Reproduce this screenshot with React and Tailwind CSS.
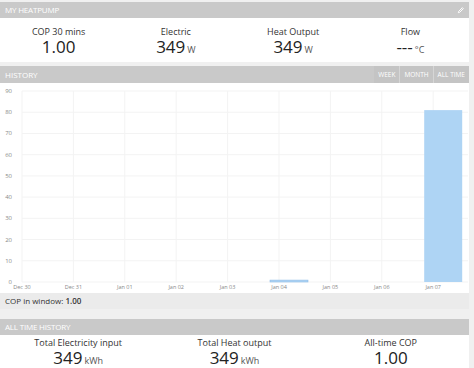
import React from 'react';

const font = { fontFamily: '"Open Sans", "Liberation Sans", sans-serif' };

const Header = ({ title, children }) => (
  <div className="flex items-center justify-between bg-[#c9c9c9] h-[16px] pl-[5px] text-white text-[8px] uppercase tracking-tight">
    <span>{title}</span>
    {children}
  </div>
);

const Stat = ({ label, value, unit, top }) => (
  <div className="flex flex-col items-center">
    <div className={`text-[9px] text-[#333] leading-none ${top}`}>{label}</div>
    <div className="mt-[2px] leading-none text-[#222]">
      <span className="text-[17px] font-medium">{value}</span>
      {unit && <span className="text-[9px] text-[#555] ml-[2px]">{unit}</span>}
    </div>
  </div>
);

const ticks = ['Dec 30', 'Dec 31', 'Jan 01', 'Jan 02', 'Jan 03', 'Jan 04', 'Jan 05', 'Jan 06', 'Jan 07'];
const bars = [{ i: 5, v: 0.9 }, { i: 8, v: 81 }];

const Chart = () => {
  const x0 = 22;
  const step = 51.4;
  const yOf = (v) => 199 - v * 2.122;
  return (
    <svg width="469" height="210" className="block">
      {Array.from({ length: 10 }, (_, k) => (
        <g key={k}>
          <line x1={x0} x2={468} y1={yOf(k * 10)} y2={yOf(k * 10)} stroke="#f3f3f3" strokeWidth="1" />
          <text x={12} y={yOf(k * 10) + 2} fontSize="6" fill="#888" textAnchor="end">{k * 10}</text>
        </g>
      ))}
      {ticks.map((t, i) => (
        <g key={t}>
          <line x1={x0 + i * step} x2={x0 + i * step} y1={yOf(90)} y2={yOf(0)} stroke="#f3f3f3" strokeWidth="1" />
          <text x={x0 + i * step} y={206} fontSize="5.5" fill="#888" textAnchor="middle">{t}</text>
        </g>
      ))}
      {bars.map((b) => (
        <rect
          key={b.i}
          x={x0 + b.i * step - 9}
          y={yOf(b.v)}
          width="38"
          height={yOf(0) - yOf(b.v)}
          fill="#aed4f4"
          stroke={b.v < 2 ? '#8dbbe6' : 'none'}
          strokeWidth="0.6"
        />
      ))}
    </svg>
  );
};

export default function App() {
  return (
    <div className="w-[474px] h-[368px] overflow-hidden bg-[#f0f0f0]" style={font}>
      <div className="pt-[2px] pr-[5px]">
        {/* my heatpump */}
        <div>
          <Header title="My Heatpump">
            <svg width="8" height="8" viewBox="0 0 24 24" className="mr-[4px]" fill="none" stroke="white" strokeWidth="3">
              <path d="M4 20l4-1 11-11-3-3L5 16z" />
            </svg>
          </Header>
          <div className="grid grid-cols-4 bg-white h-[44px]">
            <Stat label="COP 30 mins" value="1.00" top="mt-[9px]" />
            <Stat label="Electric" value="349" unit="W" top="mt-[9px]" />
            <Stat label="Heat Output" value="349" unit="W" top="mt-[9px]" />
            <Stat label="Flow" value="---" unit="°C" top="mt-[9px]" />
          </div>
        </div>

        {/* history */}
        <div className="mt-[4px]">
          <div className="flex items-stretch justify-between bg-[#c9c9c9] h-[17px] pl-[5px] text-white text-[8px] uppercase">
            <span className="self-center">History</span>
            <div className="flex text-[6.5px]">
              <div className="flex items-center px-[4px] bg-[#c4c4c4] border-r border-[#d6d6d6]">WEEK</div>
              <div className="flex items-center px-[4px] bg-[#c4c4c4] border-r border-[#d6d6d6]">MONTH</div>
              <div className="flex items-center px-[4px] bg-[#c4c4c4]">ALL TIME</div>
            </div>
          </div>
          <div className="bg-white">
            <Chart />
          </div>
          <div className="bg-[#ebebeb] h-[16px] pl-[5px] flex items-center text-[8px] text-[#333]">
            COP in window:&nbsp;<b className="font-semibold">1.00</b>
          </div>
        </div>

        {/* all time */}
        <div className="mt-[10px]">
          <Header title="All time history" />
          <div className="grid grid-cols-3 bg-white h-[40px]">
            <Stat label="Total Electricity input" value="349" unit="kWh" top="mt-[3px]" />
            <Stat label="Total Heat output" value="349" unit="kWh" top="mt-[3px]" />
            <Stat label="All-time COP" value="1.00" top="mt-[3px]" />
          </div>
        </div>
      </div>
    </div>
  );
}
